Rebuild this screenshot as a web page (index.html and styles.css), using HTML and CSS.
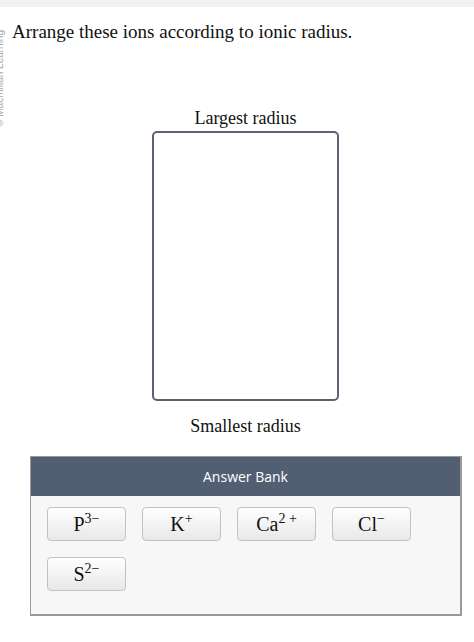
FILE: index.html
```html
<!DOCTYPE html>
<html>
<head>
<meta charset="utf-8">
<link rel="stylesheet" href="styles.css">
</head>
<body>
<div class="topbar"></div>
<div class="watermark">© Macmillan Learning</div>
<h1 class="title">Arrange these ions according to ionic radius.</h1>
<div class="sorter">
  <div class="label top-label">Largest radius</div>
  <div class="dropzone"></div>
  <div class="label bottom-label">Smallest radius</div>
</div>
<div class="bank">
  <div class="bank-head">Answer Bank</div>
  <div class="bank-body">
    <div class="chip">P<sup>3−</sup></div>
    <div class="chip">K<sup>+</sup></div>
    <div class="chip">Ca<sup>2 +</sup></div>
    <div class="chip">Cl<sup>−</sup></div>
    <div class="chip">S<sup>2−</sup></div>
  </div>
</div>
</body>
</html>
```
FILE: styles.css
```css
html, body {
  margin: 0;
  padding: 0;
  background: #ffffff;
}
body {
  width: 474px;
  height: 642px;
  overflow: hidden;
  position: relative;
  font-family: "Liberation Serif", "Times New Roman", serif;
  color: #111;
}
.topbar {
  height: 7px;
  background: #f2f2f2;
}
.watermark {
  position: absolute;
  left: -6px;
  top: 30px;
  transform-origin: left top;
  transform: rotate(-90deg) translateX(-140px);
  font-family: "Liberation Sans", Arial, sans-serif;
  font-size: 10px;
  color: #a8a8a8;
  white-space: nowrap;
  width: 140px;
  text-align: right;
}
.title {
  margin: 14px 0 0 12px;
  font-size: 19px;
  font-weight: normal;
  line-height: 22px;
}
.sorter {
  margin: 65px 0 0 30px;
  width: 431px;
  display: flex;
  flex-direction: column;
  align-items: center;
}
.label {
  font-size: 18px;
  line-height: 20px;
}
.dropzone {
  margin-top: 3px;
  width: 183px;
  height: 266px;
  border: 2px solid #5b6372;
  border-radius: 5px;
}
.bottom-label {
  margin-top: 15px;
}
.bank {
  margin: 20px 0 0 30px;
  width: 429px;
  border: 1px solid #9a9a9a;
  border-width: 1px 2px 2px 1px;
  background: #f7f7f7;
}
.bank-head {
  height: 39px;
  background: #525f73;
  color: #ffffff;
  font-family: "Open Sans", "Noto Sans", sans-serif;
  font-size: 14px;
  display: flex;
  align-items: center;
  justify-content: center;
}
.bank-body {
  display: flex;
  flex-wrap: wrap;
  gap: 16px 16px;
  padding: 11px 16px 23px 16px;
}
.chip {
  width: 77px;
  height: 32px;
  border: 1px solid #c2c2c2;
  border-radius: 4px;
  background: linear-gradient(#ffffff, #e8e8e8);
  display: flex;
  align-items: center;
  justify-content: center;
  font-size: 20px;
}
.chip sup {
  font-size: 14px;
  line-height: 0;
  position: relative;
  top: -5px;
}
```
